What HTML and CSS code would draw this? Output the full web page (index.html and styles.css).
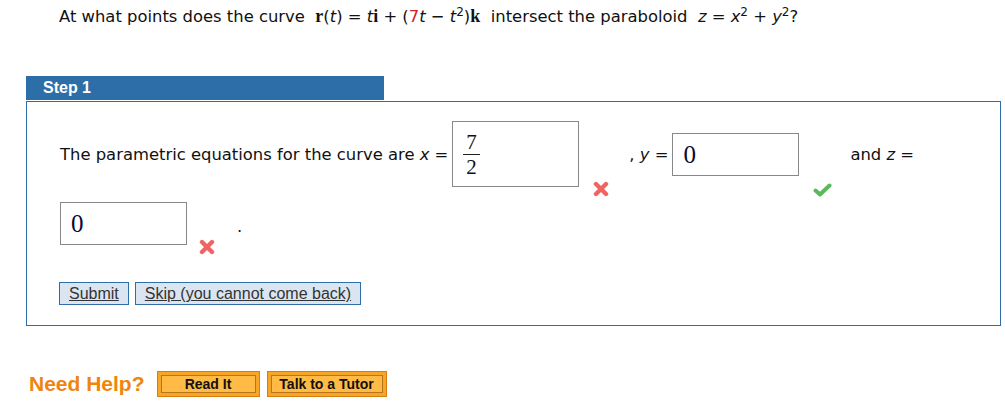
FILE: index.html
```html
<!DOCTYPE html>
<html>
<head>
<meta charset="utf-8">
<link rel="stylesheet" href="styles.css">
</head>
<body>
<p class="question">At what points does the curve&nbsp; <span class="mb">r</span>(<i>t</i>) = <i>t</i><span class="mb">i</span> + (<span class="red">7</span><i>t</i> − <i>t</i><sup>2</sup>)<span class="mb">k</span>&nbsp; intersect the paraboloid&nbsp; <i>z</i> = <i>x</i><sup>2</sup> + <i>y</i><sup>2</sup>?</p>

<section class="step">
  <div class="step-head">Step 1</div>
  <div class="step-body">
    <div class="row row1">
      <span class="txt">The parametric equations for the curve are <i>x</i> =</span>
      <div class="ans tall">
        <span class="frac"><span class="num">7</span><span class="den">2</span></span>
      </div>
      <svg class="icon wrong" width="16" height="16" viewBox="0 0 16 16"><path d="M3 3 L13 13 M13 3 L3 13" stroke="#f06464" stroke-width="4.4" stroke-linecap="round"/></svg>
      <span class="txt ycomma">, <i>y</i> =</span>
      <div class="ans"><span class="val">0</span></div>
      <svg class="icon right" width="19" height="14" viewBox="0 0 19 14"><path d="M2.5 7.5 L7 11.5 L16.5 2.5" fill="none" stroke="#5cb85c" stroke-width="4" stroke-linecap="round" stroke-linejoin="round"/></svg>
      <span class="txt andz">and <i>z</i> =</span>
    </div>
    <div class="row row2">
      <div class="ans"><span class="val">0</span></div>
      <svg class="icon wrong w2" width="16" height="16" viewBox="0 0 16 16"><path d="M3 3 L13 13 M13 3 L3 13" stroke="#f06464" stroke-width="4.4" stroke-linecap="round"/></svg>
      <span class="txt dot">.</span>
    </div>
    <div class="buttons">
      <button class="btn">Submit</button>
      <button class="btn">Skip (you cannot come back)</button>
    </div>
  </div>
</section>

<div class="help">
  <span class="need">Need Help?</span>
  <button class="hbtn read"><span>Read It</span></button>
  <button class="hbtn tutor"><span>Talk to a Tutor</span></button>
</div>
</body>
</html>
```

FILE: styles.css
```css
html, body {
  margin: 0;
  padding: 0;
  background: #fff;
}
body {
  font-family: "DejaVu Sans", Verdana, sans-serif;
  font-size: 16.4px;
  color: #111;
}
.question {
  margin: 0;
  padding: 6px 0 0 59px;
  height: 76px;
  box-sizing: border-box;
  line-height: 20px;
}
.question sup {
  font-size: 12px;
  line-height: 0;
}
.mb {
  font-family: "Liberation Serif", serif;
  font-weight: bold;
  font-size: 18px;
}
.red { color: #d42020; }

.step {
  margin-left: 26px;
  width: 975px;
}
.step-head {
  width: 358px;
  height: 24px;
  background: #2e6ea8;
  color: #fff;
  font-family: "Liberation Sans", Arial, sans-serif;
  font-weight: bold;
  font-size: 16px;
  line-height: 24px;
  padding-left: 17px;
  box-sizing: border-box;
}
.step-body {
  margin-top: 1px;
  border: 1px solid #2e6ea8;
  padding: 19px 0 20px 33px;
}
.row {
  display: flex;
  align-items: center;
}
.txt { white-space: nowrap; }
.row1 .txt:first-child { margin-right: 4px; }
.ans {
  width: 127px;
  height: 43px;
  border: 1px solid #888;
  box-sizing: border-box;
  display: flex;
  align-items: center;
  padding-left: 10px;
}
.ans.tall {
  width: 127px;
  height: 66px;
}
.val {
  font-family: "Liberation Serif", serif;
  font-size: 25px;
  color: #0a0a30;
  line-height: 1;
}
.frac {
  display: inline-flex;
  flex-direction: column;
  align-items: center;
  font-family: "Liberation Serif", serif;
  font-size: 21px;
  line-height: 20px;
  color: #111;
}
.frac .num {
  border-bottom: 1px solid #222;
  padding: 0 3px 2px;
}
.frac .den { padding-top: 2px; }
.icon {
  align-self: flex-end;
  margin-bottom: -10px;
  flex: none;
}
.wrong { margin-left: 14px; }
.ycomma { margin-left: 20px; margin-right: 4px; }
.right { margin-left: 14px; }
.andz { margin-left: 18px; }
.row2 { margin-top: 15px; }
.w2 { margin-left: 12px; }
.dot { margin-left: 22px; margin-top: 6px; }
.buttons {
  display: flex;
  gap: 6px;
  margin-top: 37px;
  margin-left: -1px;
}
.btn {
  font-family: "Liberation Sans", Arial, sans-serif;
  font-size: 16px;
  text-decoration: underline;
  color: #333;
  background: #dbe5f1;
  border: 1px solid #2e6ea8;
  height: 23px;
  padding: 0 9px;
  margin: 0;
  line-height: 21px;
}
.help {
  display: flex;
  align-items: center;
  margin-top: 45px;
  padding-left: 29px;
}
.need {
  font-family: "Liberation Sans", Arial, sans-serif;
  font-weight: bold;
  font-size: 21px;
  color: #f0850c;
  margin-right: 12px;
}
.hbtn {
  margin: 0 7px 0 0;
  padding: 3px;
  height: 26px;
  background: #f7a526;
  border: 1px solid #d77d12;
  box-sizing: border-box;
  display: flex;
}
.hbtn span {
  display: block;
  flex: 1;
  border: 1px solid #b8761a;
  background: #ffbb45;
  font-family: "Liberation Sans", Arial, sans-serif;
  font-weight: bold;
  font-size: 14px;
  line-height: 16px;
  color: #111;
  padding: 0;
  text-align: center;
}
.read { width: 103px; }
.tutor { width: 120px; }
```
